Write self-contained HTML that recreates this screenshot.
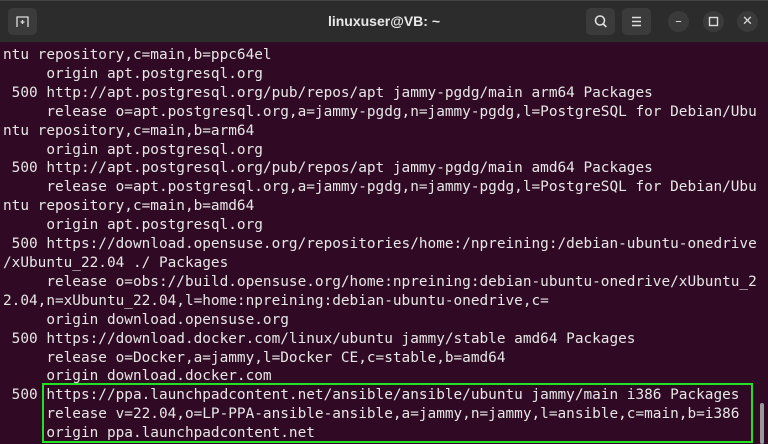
<!DOCTYPE html>
<html><head><style>
body{margin:0;width:768px;height:444px;overflow:hidden;background:#300a24;position:relative;font-family:"Liberation Mono",monospace}
.hd{position:absolute;left:0;top:0;width:768px;height:41px;background:#2c2c2c;border-top:1px solid #444}
.title{position:absolute;left:0;width:768px;top:12px;text-align:center;color:#e8e8e8;font:bold 14px "Liberation Sans",sans-serif}
.btn{position:absolute;top:7px;width:29px;height:27px;background:#3b3b3b;border-radius:5px}
.cb{position:absolute;top:10px;width:21px;height:21px;background:#3a3a3a;border-radius:50%;color:#ddd;text-align:center;font:13px/21px "DejaVu Sans",sans-serif}
pre{position:absolute;left:3px;top:46px;margin:0;font-size:14.4px;line-height:18.9px;color:#e6e6e6}
.box{position:absolute;left:42px;top:383px;width:707px;height:56px;border:2.5px solid #22e022}
.sb{position:absolute;left:760px;top:403px;width:4px;height:41px;background:#999;border-radius:2px}
</style></head><body>
<div class="hd">
<div class="btn" style="left:8px"><svg width="29" height="27"><path d="M9 19V9h11v10M12.5 14h4M14.5 12v4" stroke="#ddd" stroke-width="1.3" fill="none"/></svg></div>
<div class="title">linuxuser@VB: ~</div>
<div class="btn" style="left:586px"><svg width="29" height="27"><circle cx="14" cy="12.5" r="4.5" stroke="#ddd" stroke-width="1.6" fill="none"/><path d="M17.3 16l3 3" stroke="#ddd" stroke-width="1.6"/></svg></div>
<div class="btn" style="left:622px"><svg width="29" height="27"><path d="M10 9.5h9M10 13.5h9M10 17.5h9" stroke="#ddd" stroke-width="1.5"/></svg></div>
<div class="cb" style="left:668px">–</div>
<div class="cb" style="left:703px"><svg width="21" height="21"><rect x="6.5" y="6.5" width="8" height="8" stroke="#ddd" stroke-width="1.4" fill="none"/></svg></div>
<div class="cb" style="left:737px">✕</div>
</div>
<pre>ntu repository,c=main,b=ppc64el
     origin apt.postgresql.org
 500 http://apt.postgresql.org/pub/repos/apt jammy-pgdg/main arm64 Packages
     release o=apt.postgresql.org,a=jammy-pgdg,n=jammy-pgdg,l=PostgreSQL for Debian/Ubu
ntu repository,c=main,b=arm64
     origin apt.postgresql.org
 500 http://apt.postgresql.org/pub/repos/apt jammy-pgdg/main amd64 Packages
     release o=apt.postgresql.org,a=jammy-pgdg,n=jammy-pgdg,l=PostgreSQL for Debian/Ubu
ntu repository,c=main,b=amd64
     origin apt.postgresql.org
 500 https://download.opensuse.org/repositories/home:/npreining:/debian-ubuntu-onedrive
/xUbuntu_22.04 ./ Packages
     release o=obs://build.opensuse.org/home:npreining:debian-ubuntu-onedrive/xUbuntu_2
2.04,n=xUbuntu_22.04,l=home:npreining:debian-ubuntu-onedrive,c=
     origin download.opensuse.org
 500 https://download.docker.com/linux/ubuntu jammy/stable amd64 Packages
     release o=Docker,a=jammy,l=Docker CE,c=stable,b=amd64
     origin download.docker.com
 500 https://ppa.launchpadcontent.net/ansible/ansible/ubuntu jammy/main i386 Packages
     release v=22.04,o=LP-PPA-ansible-ansible,a=jammy,n=jammy,l=ansible,c=main,b=i386
     origin ppa.launchpadcontent.net</pre>
<div class="box"></div>
<div class="sb"></div>
</body></html>
